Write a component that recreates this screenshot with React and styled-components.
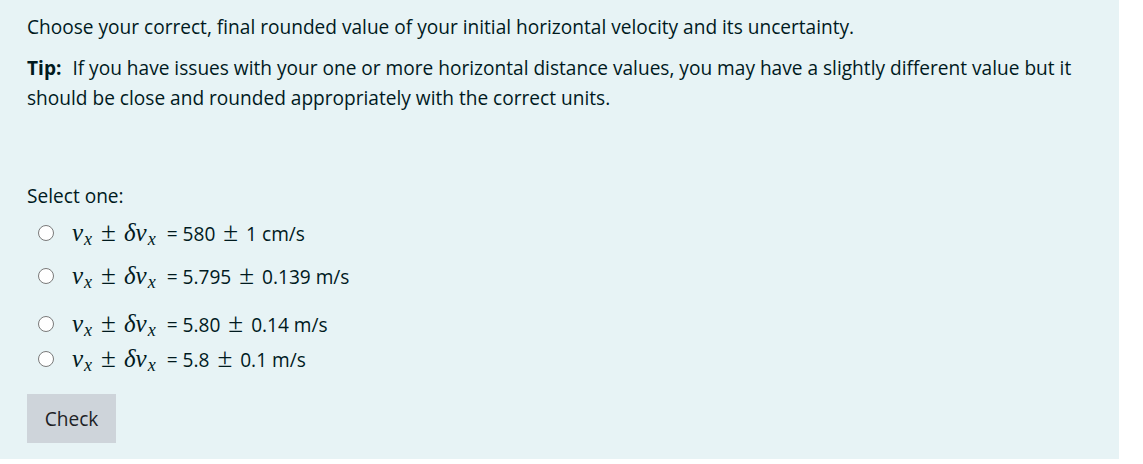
import React from "react";
import styled, { createGlobalStyle } from "styled-components";

const Global = createGlobalStyle`
  html, body { margin: 0; padding: 0; background: #ffffff; }
  body { font-family: "Open Sans", "Noto Sans", sans-serif; color: #001a1e; }
`;

const Panel = styled.div`
  width: 1119px;
  height: 459px;
  box-sizing: border-box;
  background: #e7f3f5;
  padding: 12px 27px 0 27px;
  font-size: 19.1px;
  line-height: 30px;
`;

const Para = styled.p`
  margin: 0 0 ${(p) => p.$mb || 0}px 0;
`;

const Bold = styled.strong`
  font-weight: 700;
  margin-right: 6px;
`;

const Prompt = styled.div`
  margin-top: 68px;
`;

const Options = styled.div`
  display: flex;
  flex-direction: column;
`;

const Option = styled.label`
  display: flex;
  align-items: center;
  height: 30px;
  margin-top: ${(p) => p.$mt}px;
`;

const Radio = styled.span`
  width: 16px;
  height: 16px;
  box-sizing: border-box;
  margin-left: 11px;
  border: 1.5px solid #7a7a7a;
  border-radius: 50%;
  background: #ffffff;
  flex: none;
`;

const Math = styled.span`
  font-family: "Liberation Serif", "DejaVu Serif", serif;
  font-style: italic;
  font-size: 25px;
  margin-left: 18px;
  display: inline-flex;
  align-items: baseline;
  white-space: nowrap;
`;

const Sub = styled.span`
  font-size: 18px;
  position: relative;
  top: 4px;
  margin-left: 1px;
`;

const Op = styled.span`
  font-style: normal;
  font-size: 27px;
  margin: 0 8px 0 9px;
`;

const Value = styled.span`
  margin-left: 11px;
  white-space: nowrap;
`;

const Pm = styled.span`
  font-family: "Liberation Serif", "DejaVu Serif", serif;
  font-size: 27px;
  margin: 0 8px 0 3px;
`;

const Button = styled.button`
  margin-top: 20px;
  width: 89px;
  height: 49px;
  border: none;
  background: #ced4da;
  color: #1d2125;
  font-family: "Open Sans", "Noto Sans", sans-serif;
  font-size: 19.1px;
  padding: 0;
`;

const options = [
  { v: "580", e: "1 cm/s", mt: 7 },
  { v: "5.795", e: "0.139 m/s", mt: 13 },
  { v: "5.80", e: "0.14 m/s", mt: 18 },
  { v: "5.8", e: "0.1 m/s", mt: 5 },
];

export default function App() {
  return (
    <>
      <Global />
      <Panel>
        <Para $mb={11}>
          Choose your correct, final rounded value of your initial horizontal velocity and its uncertainty.
        </Para>
        <Para>
          <Bold>Tip:</Bold> If you have issues with your one or more horizontal distance values, you may have a slightly different value but it should be close and rounded appropriately with the correct units.
        </Para>
        <Prompt>Select one:</Prompt>
        <Options>
          {options.map((o, i) => (
            <Option key={i} $mt={o.mt}>
              <Radio />
              <Math>
                v<Sub>x</Sub>
                <Op>±</Op>
                δv<Sub>x</Sub>
              </Math>
              <Value>
                = {o.v} <Pm>±</Pm>{o.e}
              </Value>
            </Option>
          ))}
        </Options>
        <Button>Check</Button>
      </Panel>
    </>
  );
}
